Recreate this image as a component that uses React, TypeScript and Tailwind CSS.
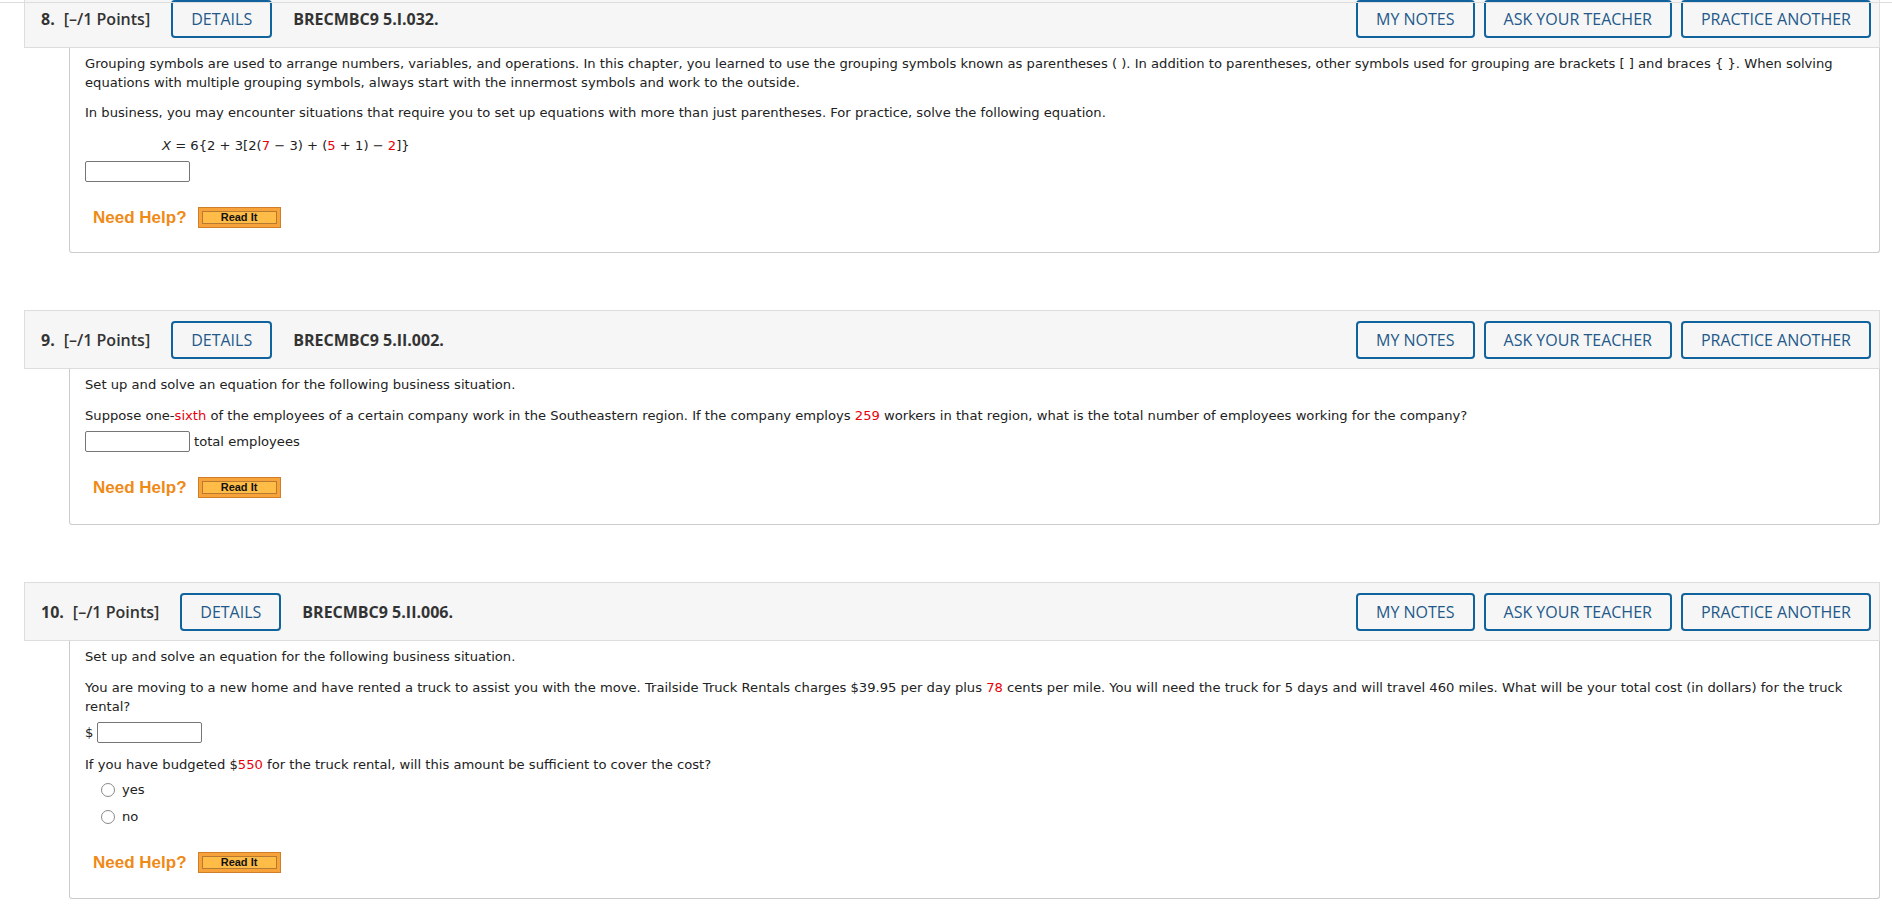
import React from "react";

const Red = ({ children }: { children: React.ReactNode }) => (
  <span className="text-[#e8000b]">{children}</span>
);

function HeaderButton({ label }: { label: string }) {
  return (
    <button className="h-[38px] px-[18px] border-2 border-[#10639c] rounded-[4px] bg-[#f6f6f6] text-[#23598a] text-[16px] leading-[22px] font-medium whitespace-nowrap">
      {label}
    </button>
  );
}

function NeedHelp() {
  return (
    <div className="flex items-center ml-[8px]">
      <span className="text-[#ef8a17] font-bold text-[17px] leading-[20px] [font-family:'Liberation_Sans',Arial,sans-serif]">
        Need Help?
      </span>
      <div className="ml-[11px] w-[83px] h-[21px] bg-[#f7a33a] border border-[#cf7f2a] p-[3px] flex">
        <div className="flex-1 bg-[#ffbd48] border border-[#b77a32] flex items-center justify-center text-[11px] font-bold text-[#111] leading-none [font-family:'Liberation_Sans',Arial,sans-serif]">
          Read It
        </div>
      </div>
    </div>
  );
}

function TextInput({ className = "" }: { className?: string }) {
  return (
    <div
      className={
        "w-[105px] h-[21px] border border-[#767676] rounded-[2px] bg-white " +
        className
      }
    />
  );
}

function Radio({ label }: { label: string }) {
  return (
    <div className="flex items-center h-[19px] ml-[16px]">
      <span className="w-[14px] h-[14px] rounded-full border border-[#8a8a8a] bg-white" />
      <span className="ml-[7px]">{label}</span>
    </div>
  );
}

function Question({
  num,
  title,
  children,
}: {
  num: string;
  title: string;
  children: React.ReactNode;
}) {
  return (
    <section>
      <header className="flex items-center h-[59px] border border-[#dddddd] bg-[#f6f6f6] pl-[16px] pr-[8px] [font-family:'Open_Sans',sans-serif] text-[#333333] text-[16px]">
        <span className="font-bold">{num}</span>
        <span className="ml-[9px] font-semibold">[–/1 Points]</span>
        <div className="ml-[21px]">
          <HeaderButton label="DETAILS" />
        </div>
        <span className="ml-[21px] font-bold">{title}</span>
        <div className="ml-auto flex gap-[9px]">
          <HeaderButton label="MY NOTES" />
          <HeaderButton label="ASK YOUR TEACHER" />
          <HeaderButton label="PRACTICE ANOTHER" />
        </div>
      </header>
      <div className="ml-[45px] border-x border-b border-[#cccccc] rounded-b-[3px] pl-[15px] pr-[15px] text-[13.13px] leading-[19px] text-[#222222] [font-family:'DejaVu_Sans',Verdana,sans-serif]">
        {children}
      </div>
    </section>
  );
}

export default function App() {
  return (
    <div className="relative w-full h-[909px] overflow-hidden bg-white">
      <div className="-mt-[11px] pl-[24px] pr-[12px] flex flex-col gap-[57px]">
        <Question num="8." title="BRECMBC9 5.I.032.">
          <div className="pt-[6px] pb-[24px]">
            <p>
              Grouping symbols are used to arrange numbers, variables, and operations. In this chapter, you learned to
              use the grouping symbols known as parentheses ( ). In addition to parentheses, other symbols used for
              grouping are brackets [ ] and braces {"{ }"}. When solving equations with multiple grouping symbols,
              always start with the innermost symbols and work to the outside.
            </p>
            <p className="mt-[11px]">
              In business, you may encounter situations that require you to set up equations with more than just
              parentheses. For practice, solve the following equation.
            </p>
            <p className="mt-[14px] pl-[77px] whitespace-pre">
              <i>X</i>
              {" = 6{2 + 3[2("}
              <Red>7</Red>
              {" − 3) + ("}
              <Red>5</Red>
              {" + 1) − "}
              <Red>2</Red>
              {"]}"}
            </p>
            <TextInput className="mt-[6px]" />
            <div className="mt-[25px]">
              <NeedHelp />
            </div>
          </div>
        </Question>

        <Question num="9." title="BRECMBC9 5.II.002.">
          <div className="pt-[6px] pb-[26px]">
            <p>Set up and solve an equation for the following business situation.</p>
            <p className="mt-[12px]">
              Suppose one-<Red>sixth</Red> of the employees of a certain company work in the Southeastern region. If
              the company employs <Red>259</Red> workers in that region, what is the total number of employees working
              for the company?
            </p>
            <div className="mt-[6px] flex items-center">
              <TextInput />
              <span className="ml-[4px]">total employees</span>
            </div>
            <div className="mt-[25px]">
              <NeedHelp />
            </div>
          </div>
        </Question>

        <Question num="10." title="BRECMBC9 5.II.006.">
          <div className="pt-[6px] pb-[25px]">
            <p>Set up and solve an equation for the following business situation.</p>
            <p className="mt-[12px]">
              You are moving to a new home and have rented a truck to assist you with the move. Trailside Truck Rentals
              charges $39.95 per day plus <Red>78</Red> cents per mile. You will need the truck for 5 days and will
              travel 460 miles. What will be your total cost (in dollars) for the truck rental?
            </p>
            <div className="mt-[6px] flex items-center">
              <span>$</span>
              <TextInput className="ml-[4px]" />
            </div>
            <p className="mt-[12px]">
              If you have budgeted $<Red>550</Red> for the truck rental, will this amount be sufficient to cover the
              cost?
            </p>
            <div className="mt-[6px]">
              <Radio label="yes" />
            </div>
            <div className="mt-[8px]">
              <Radio label="no" />
            </div>
            <div className="mt-[26px]">
              <NeedHelp />
            </div>
          </div>
        </Question>
      </div>
      <div className="absolute top-[2px] left-0 right-0 h-px bg-[#dddddd]" />
    </div>
  );
}
